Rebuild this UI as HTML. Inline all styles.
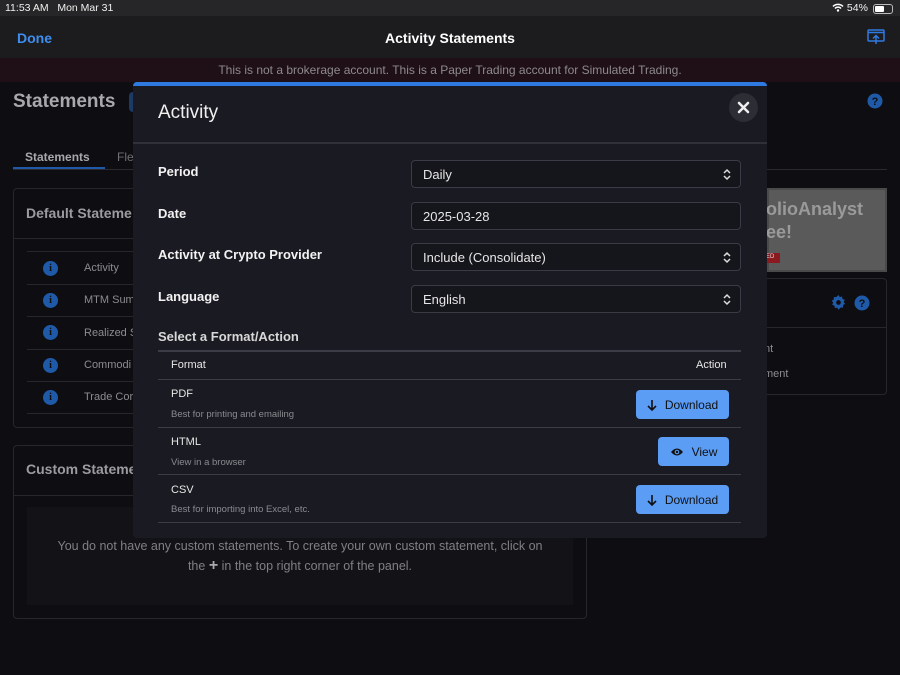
<!DOCTYPE html>
<html><head><meta charset="utf-8"><style>
*{box-sizing:border-box;margin:0;padding:0}
body{width:900px;height:675px;overflow:hidden;background:#0e0e12;font-family:"Liberation Sans",sans-serif;position:relative;color:#ddd}
.a{position:absolute}
.t{white-space:nowrap}
.sel{position:absolute;left:411px;width:330px;height:28px;border:1px solid #3a3b44;border-radius:4px;background:#15161c;color:#e6e6e6;font-size:13px;padding:6px 0 0 11px}
.chev{position:absolute;right:8px;top:7px}
.lbl{position:absolute;left:158px;font-size:13px;font-weight:bold;color:#f2f2f2}
.hl{position:absolute;left:158px;width:583px;height:1px;background:#3b3c45}
.btn{position:absolute;background:#5b9cf5;border-radius:4px;color:#111;font-size:12px;height:29px;display:flex;align-items:center;justify-content:center;gap:8px}
.fmt{position:absolute;left:171px;font-size:11px;color:#e6e6e6}
.sub{position:absolute;left:171px;font-size:9.5px;color:#8a8a90}
.info{position:absolute;left:43px;width:15px;height:15px;border-radius:50%;background:#1f5aa8;color:#0e0e12;font-size:10px;font-weight:bold;text-align:center;line-height:15px;font-family:"Liberation Serif",serif}
.rl{position:absolute;left:27px;width:560px;height:1px;background:#26262c}
.rt{position:absolute;left:84px;font-size:11px;color:#8c8c90}
</style></head><body>
<!-- status bar -->
<div class="a" style="left:0;top:0;width:900px;height:16px;background:#262628"></div>
<div class="a t" style="left:5px;top:2px;font-size:10.5px;color:#f0f0f0">11:53 AM&nbsp;&nbsp;&nbsp;Mon Mar 31</div>
<div class="a t" style="left:832px;top:2px;font-size:10.5px;color:#f0f0f0">
<svg width="12" height="9" viewBox="0 0 12 9" style="vertical-align:-1px"><path d="M1 3.5a7 7 0 0 1 10 0M3 5.5a4 4 0 0 1 6 0" stroke="#fff" stroke-width="1.5" fill="none"/><circle cx="6" cy="7.5" r="1.2" fill="#fff"/></svg> 54%</div>
<div class="a" style="left:873px;top:4px;width:20px;height:10px;border:1px solid #bbb;border-radius:3px"><div style="margin:1px;width:9px;height:6px;background:#fff;border-radius:1px"></div></div>
<!-- nav -->
<div class="a" style="left:0;top:16px;width:900px;height:42px;background:#1c1c1e"></div>
<div class="a t" style="left:17px;top:30px;font-size:14px;font-weight:bold;color:#3d8ef0">Done</div>
<div class="a t" style="left:0;width:900px;text-align:center;top:30px;font-size:14px;font-weight:bold;color:#fff">Activity Statements</div>
<svg class="a" style="left:867px;top:29px" width="18" height="17" viewBox="0 0 18 17"><rect x="1" y="1" width="16" height="11" rx="1" stroke="#2f7ae0" stroke-width="1.5" fill="none"/><line x1="1" y1="3.5" x2="17" y2="3.5" stroke="#2f7ae0" stroke-width="1.5"/><path d="M9 15V7M6 9.5 9 6.5l3 3" stroke="#2f7ae0" stroke-width="1.5" fill="none"/></svg>
<!-- banner -->
<div class="a" style="left:0;top:58px;width:900px;height:24px;background:#1e1016"></div>
<div class="a t" style="left:0;width:900px;text-align:center;top:63px;font-size:12px;color:#8e8a8c">This is not a brokerage account. This is a Paper Trading account for Simulated Trading.</div>
<!-- background page -->
<div class="a t" style="left:13px;top:91px;font-size:19px;font-weight:bold;color:#a9a9ad">Statements</div>
<div class="a" style="left:129px;top:92px;width:10px;height:20px;background:#1c3a66;border-radius:4px"></div>
<svg class="a" style="left:867px;top:93px" width="16" height="16"><circle cx="8" cy="8" r="7.5" fill="#1f5aa8"/><text x="8" y="12" text-anchor="middle" font-size="11" font-weight="bold" fill="#0e0e12" font-family="Liberation Sans">?</text></svg>
<div class="a t" style="left:25px;top:150px;font-size:12px;font-weight:bold;color:#a8a8ac">Statements</div>
<div class="a t" style="left:117px;top:150px;font-size:12px;color:#707074">Fle</div>
<div class="a" style="left:13px;top:169px;width:874px;height:1px;background:#2a2a30"></div>
<div class="a" style="left:13px;top:167px;width:92px;height:2px;background:#1f5aa8"></div>
<div class="a" style="left:13px;top:188px;width:574px;height:240px;border:1px solid #26262c;border-radius:4px"></div>
<div class="a t" style="left:26px;top:205px;font-size:14px;font-weight:bold;color:#9c9ca0">Default Stateme</div>
<div class="a" style="left:13px;top:238px;width:574px;height:1px;background:#26262c"></div>
<div class="rl" style="top:251px"></div>
<div class="info" style="top:261px">i</div><div class="rt" style="top:262px">Activity</div>
<div class="rl" style="top:284px"></div>
<div class="info" style="top:293px">i</div><div class="rt" style="top:294px">MTM Sum</div>
<div class="rl" style="top:316px"></div>
<div class="info" style="top:325px">i</div><div class="rt" style="top:327px">Realized S</div>
<div class="rl" style="top:349px"></div>
<div class="info" style="top:358px">i</div><div class="rt" style="top:359px">Commodi</div>
<div class="rl" style="top:381px"></div>
<div class="info" style="top:390px">i</div><div class="rt" style="top:391px">Trade Cor</div>
<div class="rl" style="top:413px"></div>
<div class="a" style="left:13px;top:445px;width:574px;height:174px;border:1px solid #26262c;border-radius:4px"></div>
<div class="a t" style="left:26px;top:461px;font-size:14px;font-weight:bold;color:#9c9ca0">Custom Stateme</div>
<div class="a" style="left:13px;top:495px;width:574px;height:1px;background:#26262c"></div>
<div class="a" style="left:27px;top:507px;width:546px;height:98px;background:#121217"></div>
<div class="a" style="left:27px;top:536px;width:546px;text-align:center;font-size:12.5px;line-height:20px;color:#808084">You do not have any custom statements. To create your own custom statement, click on<br>the <b style="font-size:16px;color:#aaa">+</b> in the top right corner of the panel.</div>
<!-- right side -->
<div class="a" style="left:767px;top:188px;width:120px;height:84px;background:#5a5a5a;border:2px solid #4a4a4a"></div>
<div class="a t" style="left:766px;top:198px;font-size:18px;font-weight:bold;color:#9a9a9a;line-height:23px">olioAnalyst<br>ee!</div>
<div class="a t" style="left:766px;top:253px;width:14px;height:10px;background:#8a1a20;color:#ddd;font-size:6px;padding-top:1px">ED</div>
<div class="a" style="left:760px;top:278px;width:127px;height:117px;border:1px solid #26262c;border-radius:4px"></div>
<svg class="a" style="left:831px;top:295px" width="15" height="15" viewBox="0 0 16 16"><path d="M8 0l1.3 2.2 2.5-.6.4 2.5 2.4 1-1 2.3 1.4 2.1-2.2 1.3.1 2.6-2.5-.1L8 15.7l-1.4-2.2-2.5.4-.4-2.5-2.4-1 1-2.3L.9 6l2.2-1.3L3 2.1l2.5.2z" fill="#1f5aa8"/><circle cx="8" cy="8" r="2.5" fill="#0e0e12"/></svg>
<svg class="a" style="left:854px;top:295px" width="16" height="16"><circle cx="8" cy="8" r="7.5" fill="#1f5aa8"/><text x="8" y="12" text-anchor="middle" font-size="11" font-weight="bold" fill="#0e0e12" font-family="Liberation Sans">?</text></svg>
<div class="a" style="left:760px;top:327px;width:127px;height:1px;background:#26262c"></div>
<div class="a t" style="left:764px;top:343px;font-size:11px;color:#8c8c90">nt</div>
<div class="a t" style="left:764px;top:368px;font-size:11px;color:#8c8c90">ment</div>
<!-- modal -->
<div class="a" style="left:133px;top:82px;width:634px;height:456px;background:#1a1b22;border-radius:4px;border-top:4px solid #2f7ae0"></div>
<div class="a t" style="left:158px;top:102px;font-size:19px;color:#f0f0f0">Activity</div>
<div class="a" style="left:729px;top:93px;width:29px;height:29px;border-radius:50%;background:#2c2d35"></div>
<svg class="a" style="left:737px;top:101px" width="13" height="13"><path d="M2 2l9 9M11 2l-9 9" stroke="#eee" stroke-width="2.6" stroke-linecap="round"/></svg>
<div class="a" style="left:133px;top:142px;width:634px;height:2px;background:#2f3038"></div>
<div class="lbl" style="top:164px">Period</div>
<div class="sel" style="top:160px">Daily<svg class="chev" width="10" height="13"><path d="M2 5l3-3 3 3M2 8l3 3 3-3" stroke="#ddd" stroke-width="1.5" fill="none"/></svg></div>
<div class="lbl" style="top:206px">Date</div>
<div class="sel" style="top:202px">2025-03-28</div>
<div class="lbl" style="top:247px">Activity at Crypto Provider</div>
<div class="sel" style="top:243px">Include (Consolidate)<svg class="chev" width="10" height="13"><path d="M2 5l3-3 3 3M2 8l3 3 3-3" stroke="#ddd" stroke-width="1.5" fill="none"/></svg></div>
<div class="lbl" style="top:289px">Language</div>
<div class="sel" style="top:285px">English<svg class="chev" width="10" height="13"><path d="M2 5l3-3 3 3M2 8l3 3 3-3" stroke="#ddd" stroke-width="1.5" fill="none"/></svg></div>
<div class="lbl" style="top:329px;color:#d8d8d8">Select a Format/Action</div>
<div class="hl" style="top:350px;height:2px"></div>
<div class="fmt" style="top:359px">Format</div>
<div class="a t" style="left:696px;top:359px;font-size:11px;color:#e6e6e6">Action</div>
<div class="hl" style="top:379px"></div>
<div class="fmt" style="top:388px">PDF</div><div class="sub" style="top:409px">Best for printing and emailing</div>
<div class="btn" style="left:636px;top:390px;width:93px"><svg width="10" height="12"><path d="M5 1v10M1 7l4 4 4-4" stroke="#111" stroke-width="1.6" fill="none"/></svg>Download</div>
<div class="hl" style="top:427px"></div>
<div class="fmt" style="top:436px">HTML</div><div class="sub" style="top:457px">View in a browser</div>
<div class="btn" style="left:658px;top:437px;width:71px"><svg width="14" height="10"><path d="M1 5Q7-2 13 5Q7 12 1 5z" fill="#111"/><circle cx="7" cy="5" r="2.3" fill="#5b9cf5"/><circle cx="7" cy="5" r="1.2" fill="#111"/></svg>View</div>
<div class="hl" style="top:474px"></div>
<div class="fmt" style="top:484px">CSV</div><div class="sub" style="top:504px">Best for importing into Excel, etc.</div>
<div class="btn" style="left:636px;top:485px;width:93px"><svg width="10" height="12"><path d="M5 1v10M1 7l4 4 4-4" stroke="#111" stroke-width="1.6" fill="none"/></svg>Download</div>
<div class="hl" style="top:522px"></div>
</body></html>
